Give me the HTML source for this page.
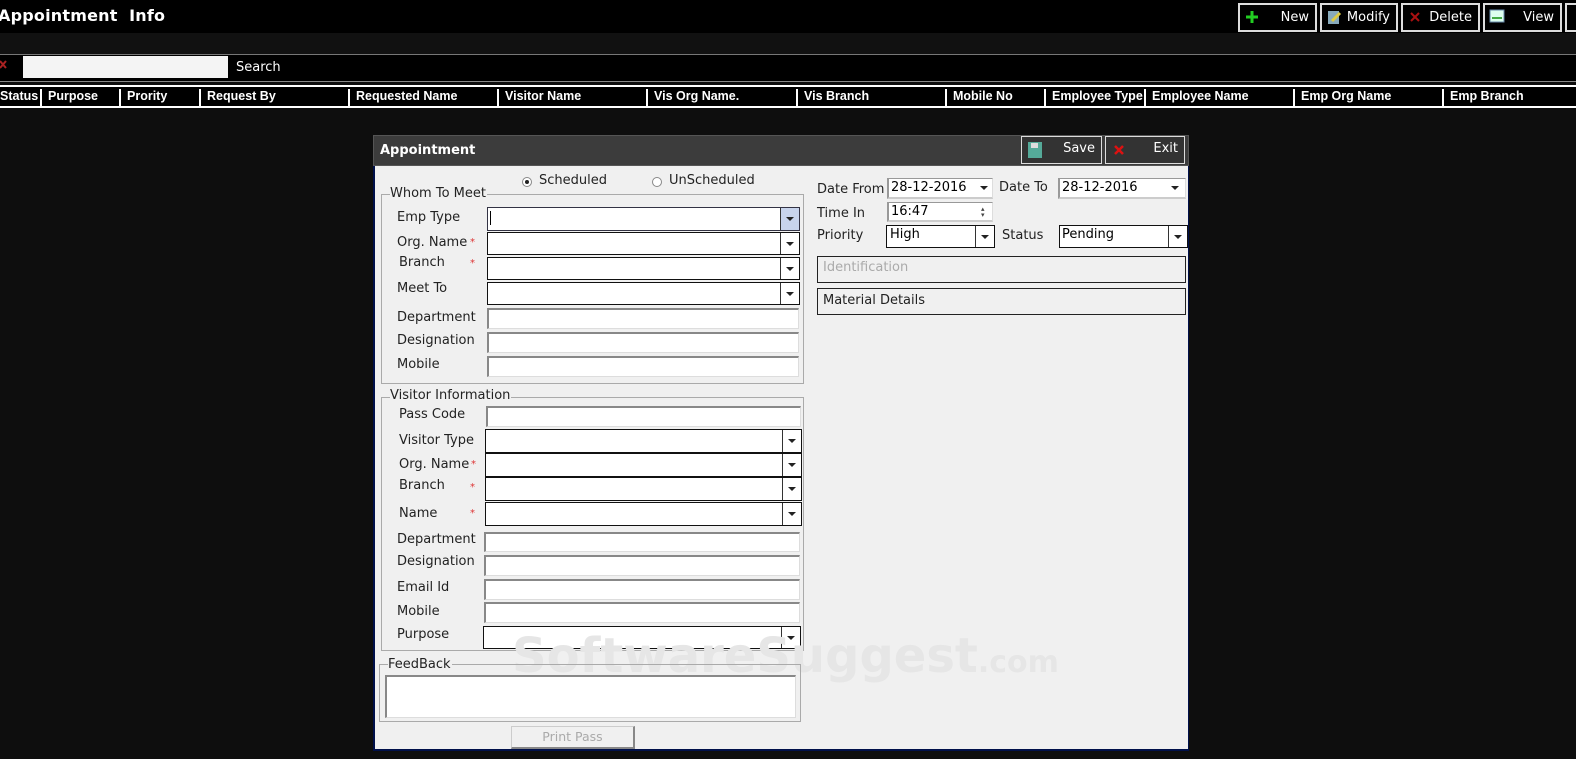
<!DOCTYPE html>
<html><head><meta charset="utf-8"><style>
*{box-sizing:border-box;margin:0;padding:0}
body{width:1576px;height:759px;background:#0e0e0e;position:relative;overflow:hidden;font-family:"DejaVu Sans","Liberation Sans",sans-serif;font-size:13px;color:#000}
.a{position:absolute}
.tb{position:absolute;top:3px;height:29px;border:2px solid #ddd;background:#000;color:#fff;font-size:13px;font-family:"DejaVu Sans",sans-serif}
.tb span{position:absolute;right:6px;top:5px}
.hd{position:absolute;top:85px;height:23px;border-top:2px solid #fff;border-bottom:2px solid #fff;background:#000;left:0;width:1576px}
.hc{position:absolute;top:2px;color:#fff;font-weight:bold;font-size:12.5px;font-family:"Liberation Sans",sans-serif;padding-left:6px;height:17px;border-left:2px solid #fff}
.lb{position:absolute;font-size:13px;color:#222}
.st{color:#d33;font-size:10px;position:absolute}
.cb{position:absolute;background:#fff;border:1px solid #111}
.cb:after{content:"";position:absolute;right:0;top:0;bottom:0;width:18px;border-left:1px solid #333;background:#fff}
.cb i{position:absolute;right:5px;top:50%;margin-top:-2px;border-left:4px solid transparent;border-right:4px solid transparent;border-top:4px solid #222;z-index:2}
.tx{position:absolute;background:#fff;border-top:2px solid #888;border-left:2px solid #888;border-right:1px solid #ddd;border-bottom:1px solid #ddd}
.gb{position:absolute;border:1px solid #aaa}
.lg{position:absolute;background:#f0f0f0;font-size:13px;color:#222;padding-right:1px}
</style></head><body>
<div class="a" style="left:0;top:0;width:1576px;height:33px;background:#000"></div>
<div class="a" style="left:-2px;top:6px;color:#fff;font-weight:bold;font-size:16px;font-family:'DejaVu Sans',sans-serif;letter-spacing:0.2px">Appointment&nbsp; Info</div>
<div class="tb" style="left:1238px;width:79px"><svg class="a" style="left:5px;top:5px" width="14" height="14"><path d="M7 1v12M1 7h12" stroke="#2c2" stroke-width="3"/></svg><span>New</span></div>
<div class="tb" style="left:1320px;width:78px"><svg class="a" style="left:5px;top:4px" width="15" height="16"><rect x="1" y="2" width="11" height="13" fill="#8ab"/><path d="M5 12l8-8" stroke="#dc4" stroke-width="3"/></svg><span>Modify</span></div>
<div class="tb" style="left:1401px;width:79px"><svg class="a" style="left:6px;top:6px" width="12" height="12"><path d="M2 2l8 8M10 2l-8 8" stroke="#a11" stroke-width="2"/></svg><span>Delete</span></div>
<div class="tb" style="left:1483px;width:79px"><svg class="a" style="left:4px;top:4px" width="16" height="14"><rect x="1" y="1" width="14" height="12" fill="#dfe" stroke="#68a"/><path d="M3 9h10" stroke="#4a4" stroke-width="2"/></svg><span>View</span></div>
<div class="tb" style="left:1565px;width:20px"></div>
<div class="a" style="left:0;top:33px;width:1576px;height:21px;background:#111"></div>
<div class="a" style="left:0;top:54px;width:1576px;height:1px;background:#777"></div>
<div class="a" style="left:0;top:55px;width:1576px;height:26px;background:#000"></div>
<svg class="a" style="left:0;top:60px" width="8" height="10"><path d="M0 1l6 7M6 1l-6 7" stroke="#a22" stroke-width="2"/></svg>
<div class="a" style="left:23px;top:56px;width:205px;height:22px;background:#f4f4f4"></div>
<div class="a" style="left:236px;top:60px;color:#fff;font-size:13px">Search</div>
<div class="a" style="left:0;top:81px;width:1576px;height:1px;background:#888"></div>
<div class="hd">
<div class="hc" style="left:-6px;border:none">Status</div>
<div class="hc" style="left:40px">Purpose</div>
<div class="hc" style="left:119px">Prority</div>
<div class="hc" style="left:199px">Request By</div>
<div class="hc" style="left:348px">Requested Name</div>
<div class="hc" style="left:497px">Visitor Name</div>
<div class="hc" style="left:646px">Vis Org Name.</div>
<div class="hc" style="left:796px">Vis Branch</div>
<div class="hc" style="left:945px">Mobile No</div>
<div class="hc" style="left:1044px">Employee Type</div>
<div class="hc" style="left:1144px">Employee Name</div>
<div class="hc" style="left:1293px">Emp Org Name</div>
<div class="hc" style="left:1442px">Emp Branch</div>
</div>

<div class="a" style="left:373px;top:135px;width:816px;height:616px;background:#f0f0f0;border-left:2px solid #00104a;border-right:1px solid #00104a;border-bottom:2px solid #00104a"></div>
<div class="a" style="left:373px;top:135px;width:816px;height:31px;background:#3c3c3c;border:1px solid #555"></div>
<div class="a" style="left:380px;top:143px;color:#fff;font-weight:bold;font-size:13px">Appointment</div>
<div class="tb" style="left:1021px;top:136px;width:81px;height:28px;border-width:1px;background:#333"><svg class="a" style="left:6px;top:5px" width="14" height="16"><rect x="0" y="0" width="14" height="16" fill="#5a9"/><rect x="3" y="1" width="7" height="5" fill="#ddd"/></svg><span style="top:4px">Save</span></div>
<div class="tb" style="left:1105px;top:136px;width:80px;height:28px;border-width:1px;background:#333"><svg class="a" style="left:8px;top:8px" width="10" height="10"><path d="M1 1l8 8M9 1l-8 8" stroke="#d11" stroke-width="2.5"/></svg><span style="top:4px">Exit</span></div>

<div class="a" style="left:522px;top:177px;width:10px;height:10px;border:1px solid #888;border-radius:50%;background:#fff"><div class="a" style="left:2px;top:2px;width:4px;height:4px;border-radius:50%;background:#222"></div></div>
<div class="lb" style="left:539px;top:173px">Scheduled</div>
<div class="a" style="left:652px;top:177px;width:10px;height:10px;border:1px solid #888;border-radius:50%;background:#fff"></div>
<div class="lb" style="left:669px;top:173px">UnScheduled</div>

<div class="gb" style="left:381px;top:194px;width:423px;height:190px"></div>
<div class="lg" style="left:390px;top:186px">Whom To Meet</div>
<div class="lb" style="left:397px;top:210px">Emp Type</div>
<div class="lb" style="left:397px;top:235px">Org. Name</div><div class="st" style="left:470px;top:237px">*</div>
<div class="lb" style="left:399px;top:255px">Branch</div><div class="st" style="left:470px;top:258px">*</div>
<div class="lb" style="left:397px;top:281px">Meet To</div>
<div class="lb" style="left:397px;top:310px">Department</div>
<div class="lb" style="left:397px;top:333px">Designation</div>
<div class="lb" style="left:397px;top:357px">Mobile</div>
<div class="cb" style="left:487px;top:207px;width:313px;height:24px;border-color:#334"><i></i></div>
<div class="a" style="left:781px;top:208px;width:18px;height:22px;background:#c8d4ec;z-index:1"></div>
<div class="a" style="left:490px;top:211px;width:1px;height:14px;background:#000"></div>
<div class="cb" style="left:487px;top:232px;width:313px;height:23px"><i></i></div>
<div class="cb" style="left:487px;top:257px;width:313px;height:23px"><i></i></div>
<div class="cb" style="left:487px;top:282px;width:313px;height:23px"><i></i></div>
<div class="tx" style="left:487px;top:308px;width:312px;height:21px"></div>
<div class="tx" style="left:487px;top:332px;width:312px;height:21px"></div>
<div class="tx" style="left:487px;top:356px;width:312px;height:21px"></div>

<div class="gb" style="left:381px;top:397px;width:423px;height:254px"></div>
<div class="lg" style="left:390px;top:388px">Visitor Information</div>
<div class="lb" style="left:399px;top:407px">Pass Code</div>
<div class="lb" style="left:399px;top:433px">Visitor Type</div>
<div class="lb" style="left:399px;top:457px">Org. Name</div><div class="st" style="left:471px;top:459px">*</div>
<div class="lb" style="left:399px;top:478px">Branch</div><div class="st" style="left:470px;top:482px">*</div>
<div class="lb" style="left:399px;top:506px">Name</div><div class="st" style="left:470px;top:508px">*</div>
<div class="lb" style="left:397px;top:532px">Department</div>
<div class="lb" style="left:397px;top:554px">Designation</div>
<div class="lb" style="left:397px;top:580px">Email Id</div>
<div class="lb" style="left:397px;top:604px">Mobile</div>
<div class="lb" style="left:397px;top:627px">Purpose</div>
<div class="tx" style="left:486px;top:406px;width:315px;height:21px"></div>
<div class="cb" style="left:485px;top:429px;width:317px;height:24px"><i></i></div>
<div class="cb" style="left:485px;top:453px;width:317px;height:24px"><i></i></div>
<div class="cb" style="left:485px;top:477px;width:317px;height:24px"><i></i></div>
<div class="cb" style="left:485px;top:502px;width:317px;height:24px"><i></i></div>
<div class="tx" style="left:484px;top:532px;width:316px;height:20px"></div>
<div class="tx" style="left:484px;top:555px;width:316px;height:21px"></div>
<div class="tx" style="left:484px;top:579px;width:316px;height:21px"></div>
<div class="tx" style="left:484px;top:602px;width:316px;height:21px"></div>
<div class="cb" style="left:483px;top:626px;width:318px;height:23px"><i></i></div>

<div class="a" style="left:512px;top:628px;font-family:'DejaVu Sans',sans-serif;font-weight:bold;font-size:48px;color:#e6e6e6;letter-spacing:0px">SoftwareSuggest<span style="font-size:30px">.com</span></div>

<div class="gb" style="left:379px;top:664px;width:422px;height:58px"></div>
<div class="lg" style="left:388px;top:657px">FeedBack</div>
<div class="tx" style="left:385px;top:675px;width:411px;height:43px"></div>
<div class="a" style="left:511px;top:726px;width:124px;height:23px;background:#f0f0f0;border:1px solid #ccc;border-right:2px solid #888;border-bottom:2px solid #888;color:#aaa;font-size:12.5px;text-align:center;line-height:20px">Print Pass</div>

<div class="lb" style="left:817px;top:182px">Date From</div>
<div class="tx" style="left:887px;top:178px;width:106px;height:21px;border-color:#999 #ddd #ccc #999;border-width:1px 1px 2px 2px"></div>
<div class="lb" style="left:891px;top:180px;color:#000">28-12-2016</div>
<div class="a" style="left:980px;top:186px;border-left:4px solid transparent;border-right:4px solid transparent;border-top:4px solid #222"></div>
<div class="lb" style="left:999px;top:180px">Date To</div>
<div class="tx" style="left:1058px;top:178px;width:128px;height:21px;border-color:#999 #ddd #ccc #999;border-width:1px 1px 2px 2px"></div>
<div class="lb" style="left:1062px;top:180px;color:#000">28-12-2016</div>
<div class="a" style="left:1171px;top:186px;border-left:4px solid transparent;border-right:4px solid transparent;border-top:4px solid #222"></div>
<div class="lb" style="left:817px;top:206px">Time In</div>
<div class="tx" style="left:887px;top:202px;width:106px;height:20px;border-width:1px 1px 2px 2px;border-color:#999 #ddd #ccc #999"></div>
<div class="lb" style="left:891px;top:204px;color:#000">16:47</div>
<div class="a" style="left:981px;top:206px;font-size:7px;line-height:6px;color:#444">▴<br>▾</div>
<div class="lb" style="left:817px;top:228px">Priority</div>
<div class="cb" style="left:886px;top:225px;width:109px;height:23px"><i></i></div>
<div class="lb" style="left:890px;top:227px;color:#000">High</div>
<div class="lb" style="left:1002px;top:228px">Status</div>
<div class="cb" style="left:1059px;top:225px;width:129px;height:23px"><i></i></div>
<div class="lb" style="left:1062px;top:227px;color:#000">Pending</div>
<div class="a" style="left:817px;top:256px;width:369px;height:27px;border:1px solid #222"></div>
<div class="lb" style="left:823px;top:260px;color:#aaa">Identification</div>
<div class="a" style="left:817px;top:288px;width:369px;height:27px;border:1px solid #222"></div>
<div class="lb" style="left:823px;top:293px">Material Details</div>
</body></html>
